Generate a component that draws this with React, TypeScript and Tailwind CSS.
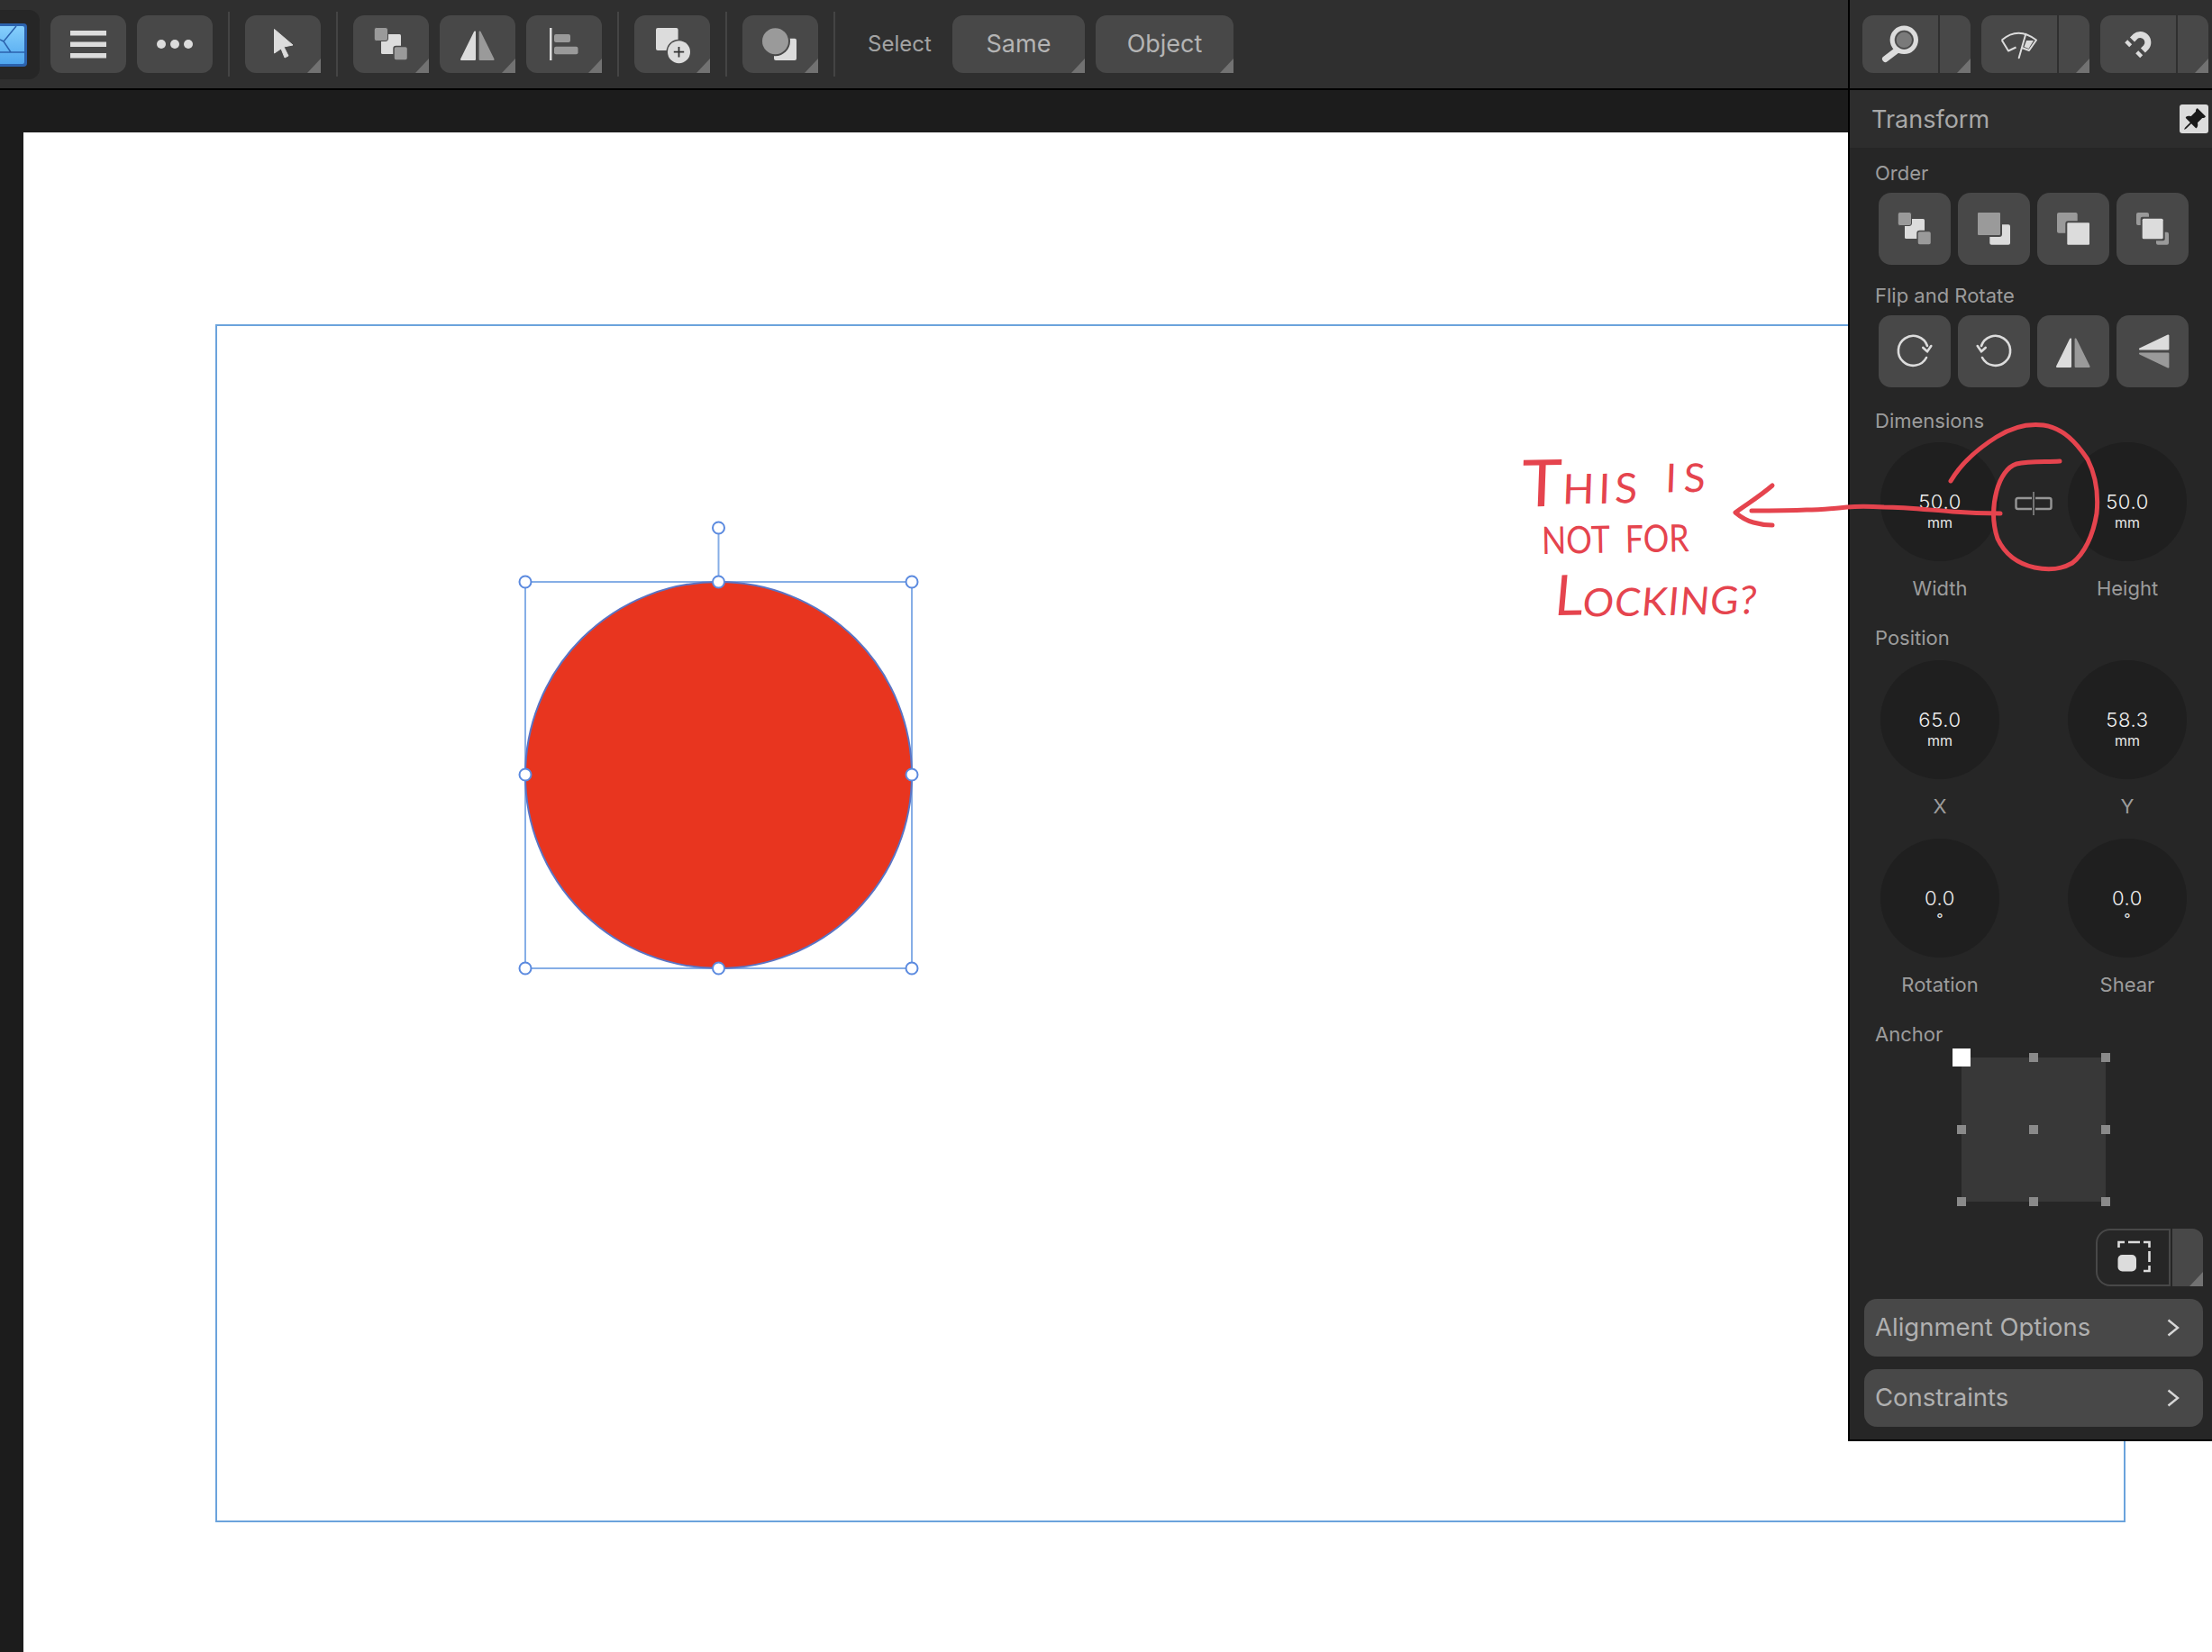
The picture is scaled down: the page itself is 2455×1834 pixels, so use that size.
import type { ReactNode } from "react";
import { BsPinAngleFill } from "react-icons/bs";

const LIGHT = "#dcdcdc";
const GREY = "#9a9a9a";
const GAP = "#484848";

// all toolbar / panel glyphs share an 80x80 box so they can be reused at both sizes
const Glyph = ({ children }: { children: ReactNode }) => (
    <svg viewBox="0 0 80 80" className="w-[80px] h-[80px] shrink-0">
        {children}
    </svg>
);

const OrderSwap = () => (
    <Glyph>
        <rect x="29" y="29" width="22" height="22" rx="1.5" fill={LIGHT} />
        <rect x="21.2" y="21.5" width="15.3" height="15" rx="2.5" fill={GREY} stroke={GAP} strokeWidth="1" />
        <rect x="43" y="42.5" width="15.5" height="15.5" rx="2.5" fill={GREY} stroke={GAP} strokeWidth="1.5" />
    </Glyph>
);

const OrderBack = () => (
    <Glyph>
        <rect x="35.3" y="35.3" width="22.7" height="22.4" rx="2" fill={LIGHT} />
        <rect x="21" y="21" width="27" height="27" rx="2" fill={GREY} stroke={GAP} strokeWidth="2" />
    </Glyph>
);

const OrderFront = () => (
    <Glyph>
        <rect x="22" y="22" width="22.7" height="22.7" rx="2" fill={GREY} />
        <rect x="32.3" y="32.3" width="26.7" height="26.4" rx="2" fill={LIGHT} stroke={GAP} strokeWidth="2" />
    </Glyph>
);

const OrderStack = () => (
    <Glyph>
        <rect x="22" y="22" width="14" height="14" rx="2" fill={GREY} />
        <rect x="44" y="43.7" width="14" height="14" rx="2" fill={GREY} />
        <rect x="26.7" y="26.7" width="27" height="26.6" rx="2" fill={GAP} />
        <rect x="28.7" y="28.7" width="23" height="22.6" rx="1.5" fill={LIGHT} />
    </Glyph>
);

const RotateArrow = ({ flip }: { flip?: boolean }) => (
    <Glyph>
        <g transform={flip ? "matrix(-1 0 0 1 80 0)" : undefined} fill="none" stroke={LIGHT} strokeWidth="2.6" strokeLinecap="round" strokeLinejoin="round">
            <path d="M53 47A16.5 16.5 0 1 1 54 34" />
            <path d="M49.3 36L54 40.3L58.3 34" />
        </g>
    </Glyph>
);

const FlipH = () => (
    <Glyph>
        <path d="M37 26.5V57H22Z" fill={LIGHT} stroke={LIGHT} strokeWidth="2" strokeLinejoin="round" />
        <path d="M42.6 26.5V57H57.6Z" fill={GREY} stroke={GREY} strokeWidth="2" strokeLinejoin="round" />
    </Glyph>
);

const FlipV = () => (
    <Glyph>
        <path d="M57.4 22.5V37.4H26Z" fill={LIGHT} stroke={LIGHT} strokeWidth="2" strokeLinejoin="round" />
        <path d="M57.4 57.5V42.6H26Z" fill={GREY} stroke={GREY} strokeWidth="2" strokeLinejoin="round" />
    </Glyph>
);

const Burger = () => (
    <Glyph>
        <rect x="20" y="25" width="40" height="5.5" fill={LIGHT} />
        <rect x="20" y="37.5" width="40" height="5.5" fill={LIGHT} />
        <rect x="20" y="50" width="40" height="5.5" fill={LIGHT} />
    </Glyph>
);

const Dots = () => (
    <Glyph>
        <circle cx="25" cy="40" r="5" fill={LIGHT} />
        <circle cx="40" cy="40" r="5" fill={LIGHT} />
        <circle cx="55" cy="40" r="5" fill={LIGHT} />
    </Glyph>
);

const Cursor = () => (
    <Glyph>
        <path d="M30.5 23.5L51 41L41 43L46 53L42 55L38 45L30.5 50Z" fill={LIGHT} stroke={LIGHT} strokeWidth="1" strokeLinejoin="round" />
    </Glyph>
);

const AlignLeft = () => (
    <Glyph>
        <rect x="24" y="22" width="2.5" height="36" fill={LIGHT} />
        <rect x="29" y="29" width="18" height="9" rx="2" fill={GREY} />
        <rect x="29" y="42.7" width="26.5" height="8.5" rx="2" fill={GREY} />
    </Glyph>
);

const AddShape = () => (
    <Glyph>
        <rect x="22" y="22" width="24.6" height="25" rx="2" fill={LIGHT} />
        <circle cx="47.5" cy="48.7" r="14" fill={GAP} />
        <circle cx="47.5" cy="48.7" r="12.5" fill={LIGHT} />
        <path d="M47.5 43V54.4M41.8 48.7H53.2" stroke="#333333" strokeWidth="1.8" />
    </Glyph>
);

const Geometry = () => (
    <Glyph>
        <rect x="33" y="33.7" width="25" height="24.3" rx="2" fill={LIGHT} />
        <ellipse cx="34.5" cy="36.7" rx="16.5" ry="16.5" fill={GAP} />
        <ellipse cx="34.5" cy="36.7" rx="14.5" ry="14.5" fill={GREY} />
    </Glyph>
);

const Magnifier = () => (
    <Glyph>
        <path d="M36 47L23.5 56.5" stroke={LIGHT} strokeWidth="7" strokeLinecap="round" />
        <circle cx="44.3" cy="35.3" r="13.2" fill="#7a7a7a" stroke={LIGHT} strokeWidth="5" />
        <circle cx="44.3" cy="35.3" r="9.5" fill="none" stroke="#484848" strokeWidth="1.6" />
    </Glyph>
);

const ViewWiper = () => (
    <Glyph>
        <g transform="translate(-2 0)">
            <g fill="none" stroke={LIGHT} strokeWidth="2" strokeLinejoin="round">
                <path d="M22.7 35.5Q41 20 61 35.5L53 47L45 44" />
                <path d="M22.7 35.5L30 47.5L38.5 43.5" />
                <path d="M41.7 55.3L49.3 28.7" strokeLinecap="round" />
            </g>
            <path d="M50 36L58 36L52.5 45L47.5 43Z" fill={LIGHT} />
        </g>
    </Glyph>
);

const Magnet = () => (
    <Glyph>
        <path d="M33.5 35L36.7 31.7A8.5 8.5 0 0 1 48.7 43.7L45.4 47" fill="none" stroke={LIGHT} strokeWidth="7" />
        <path d="M30.7 37.7L27.7 40.7M42.7 49.7L39.7 52.7" stroke={LIGHT} strokeWidth="7" />
    </Glyph>
);

const Corner = () => (
    <span className="absolute right-0 bottom-0 w-[15px] h-[16px] bg-[#727272] [clip-path:polygon(100%_0,100%_100%,0_100%)]" />
);

const ToolButton = ({ children, arrow = true, className = "w-[84px]" }: { children: ReactNode; arrow?: boolean; className?: string }) => (
    <div className={`relative h-[64px] flex items-center justify-center bg-[#484848] rounded-[12px] ${arrow ? "rounded-br-none" : ""} ${className}`}>
        {children}
        {arrow && <Corner />}
    </div>
);

const SplitButton = ({ children }: { children: ReactNode }) => (
    <div className="flex h-[64px] w-[120px]">
        <div className="w-[84px] h-full flex items-center justify-center bg-[#484848] rounded-l-[12px]">{children}</div>
        <div className="relative ml-[2px] w-[34px] h-full bg-[#484848] rounded-tr-[12px]">
            <Corner />
        </div>
    </div>
);

const Sep = () => <div className="mx-[17px] w-[2px] h-[72px] bg-[#444444]" />;

const Logo = () => (
    <div className="w-[44px] h-[77px] bg-[#262626] rounded-r-[12px] flex items-center">
        <svg viewBox="0 0 44 77" className="w-[44px] h-[77px]">
            <defs>
                <linearGradient id="logo-blue" x1="0" y1="0" x2="0" y2="1">
                    <stop offset="0" stopColor="#86cffc" />
                    <stop offset="1" stopColor="#4fa6ee" />
                </linearGradient>
            </defs>
            <rect x="-20" y="15" width="50" height="48" rx="4" fill="#2b62ad" />
            <rect x="-20" y="18" width="47" height="42" rx="2" fill="url(#logo-blue)" />
            <path d="M0 47H27M18 18L4 35L12 47M0 33L4 35" stroke="#2b62ad" strokeWidth="1.5" fill="none" />
        </svg>
    </div>
);

const Toolbar = () => (
    <div className="h-[100px] flex items-center bg-[#2f2f2f] border-b-2 border-black">
        <Logo />
        <ToolButton arrow={false} className="ml-[12px] w-[84px]"><Burger /></ToolButton>
        <ToolButton arrow={false} className="ml-[12px] w-[84px]"><Dots /></ToolButton>
        <Sep />
        <ToolButton><Cursor /></ToolButton>
        <Sep />
        <div className="flex gap-[12px]">
            <ToolButton><OrderSwap /></ToolButton>
            <ToolButton><FlipH /></ToolButton>
            <ToolButton><AlignLeft /></ToolButton>
        </div>
        <Sep />
        <ToolButton><AddShape /></ToolButton>
        <Sep />
        <ToolButton><Geometry /></ToolButton>
        <Sep />
        <span className="ml-[19px] w-[94px] text-[24px] text-[#a3a3a3]">Select</span>
        <ToolButton className="w-[147px]"><span className="text-[27px] text-[#b4b4b4]">Same</span></ToolButton>
        <ToolButton className="ml-[12px] w-[153px]"><span className="text-[27px] text-[#b4b4b4]">Object</span></ToolButton>
        <div className="ml-auto h-full w-[404px] pl-[14px] flex items-center gap-[12px] border-l-2 border-black">
            <SplitButton><Magnifier /></SplitButton>
            <SplitButton><ViewWiper /></SplitButton>
            <SplitButton><Magnet /></SplitButton>
        </div>
    </div>
);

const SectionLabel = ({ children, className = "" }: { children: ReactNode; className?: string }) => (
    <div className={`h-[28px] pl-[28px] text-[22px] leading-[28px] text-[#9c9c9c] ${className}`}>{children}</div>
);

const Square = ({ children }: { children: ReactNode }) => (
    <div className="w-[80px] h-[80px] flex items-center justify-center bg-[#484848] rounded-[14px]">{children}</div>
);

const Dial = ({ value, unit, label }: { value: string; unit: string; label: string }) => (
    <div className="w-[132px] flex flex-col items-center">
        <div className="w-[132px] h-[132px] pt-[54px] flex flex-col items-center rounded-full bg-[#1f1f1f]">
            <span className="text-[22px] leading-[24px] tracking-[0.6px] font-light text-[#f0f0f0]">{value}</span>
            <span className="mt-[1px] text-[16px] leading-[20px] text-[#e6e6e6]">{unit}</span>
        </div>
        <span className="mt-[16px] h-[28px] text-[22px] leading-[28px] text-[#9c9c9c]">{label}</span>
    </div>
);

const LinkIcon = () => (
    <svg viewBox="0 0 42 26" className="w-[42px] h-[26px]" fill="none" stroke="#969696" strokeWidth="2.4">
        <path d="M19 7H3.5Q1.5 7 1.5 9V17Q1.5 19 3.5 19H19M23 7H38.5Q40.5 7 40.5 9V17Q40.5 19 38.5 19H23" />
        <path d="M21 0V26" strokeWidth="1.4" />
    </svg>
);

const ANCHOR_SPOTS = [
    "left-0 top-1/2",
    "left-0 top-full",
    "left-1/2 top-0",
    "left-1/2 top-1/2",
    "left-1/2 top-full",
    "left-full top-0",
    "left-full top-1/2",
    "left-full top-full",
];

const Anchor = () => (
    <div className="relative ml-[124px] mt-[12px] w-[160px] h-[160px] bg-[#383838]">
        {ANCHOR_SPOTS.map((spot) => (
            <span key={spot} className={`absolute w-[10px] h-[10px] -translate-x-1/2 -translate-y-1/2 bg-[#8a8a8a] ${spot}`} />
        ))}
        <span className="absolute left-0 top-0 w-[20px] h-[20px] -translate-x-1/2 -translate-y-1/2 bg-white" />
    </div>
);

const ExpandRow = ({ label, className = "" }: { label: string; className?: string }) => (
    <div className={`ml-[16px] mr-[10px] h-[64px] pl-[12px] pr-[26px] flex items-center justify-between rounded-[14px] bg-[#484848] ${className}`}>
        <span className="text-[27.5px] text-[#b0b0b0]">{label}</span>
        <svg viewBox="0 0 14 20" className="w-[14px] h-[20px]" fill="none" stroke="#d6d6d6" strokeWidth="2.4">
            <path d="M1.5 1.5L12 10L1.5 18.5" />
        </svg>
    </div>
);

const TransformPanel = () => (
    <div className="absolute right-0 top-0 w-[404px] pb-[14px] bg-[#262626] border-l-2 border-b-2 border-black">
        <div className="h-[64px] pl-[24px] pr-[4px] flex items-center justify-between bg-[#2d2d2d]">
            <span className="pt-[2px] text-[27px] text-[#a8a8a8]">Transform</span>
            <div className="w-[32px] h-[32px] flex items-center justify-center rounded-[3px] bg-[#dcdcdc]">
                <BsPinAngleFill className="w-[27px] h-[27px] text-[#1a1a1a]" />
            </div>
        </div>

        <SectionLabel className="mt-[14px]">Order</SectionLabel>
        <div className="mt-[8px] pl-[32px] flex gap-[8px]">
            <Square><OrderSwap /></Square>
            <Square><OrderBack /></Square>
            <Square><OrderFront /></Square>
            <Square><OrderStack /></Square>
        </div>

        <SectionLabel className="mt-[20px]">Flip and Rotate</SectionLabel>
        <div className="mt-[8px] pl-[32px] flex gap-[8px]">
            <Square><RotateArrow /></Square>
            <Square><RotateArrow flip /></Square>
            <Square><FlipH /></Square>
            <Square><FlipV /></Square>
        </div>

        <SectionLabel className="mt-[23px]">Dimensions</SectionLabel>
        <div className="mt-[10px] pl-[34px] w-[374px] flex justify-between">
            <Dial value="50.0" unit="mm" label="Width" />
            <div className="h-[136px] flex items-center"><LinkIcon /></div>
            <Dial value="50.0" unit="mm" label="Height" />
        </div>

        <SectionLabel className="mt-[27px]">Position</SectionLabel>
        <div className="mt-[11px] pl-[34px] w-[374px] flex justify-between">
            <Dial value="65.0" unit="mm" label="X" />
            <Dial value="58.3" unit="mm" label="Y" />
        </div>
        <div className="mt-[22px] pl-[34px] w-[374px] flex justify-between">
            <Dial value="0.0" unit="°" label="Rotation" />
            <Dial value="0.0" unit="°" label="Shear" />
        </div>

        <SectionLabel className="mt-[27px]">Anchor</SectionLabel>
        <Anchor />

        <div className="mt-[30px] pr-[10px] flex justify-end">
            <div className="w-[83px] h-[64px] flex items-center justify-center rounded-l-[16px] border-2 border-[#484848]">
                <svg viewBox="0 0 80 64" className="w-[80px] h-[64px] shrink-0">
                    <path d="M23.5 21V15H30M34 15H47M51 15H57.5V21M57.5 25V37M57.5 41V47H51" fill="none" stroke={LIGHT} strokeWidth="2.6" />
                    <rect x="22.5" y="29" width="20.5" height="18.5" rx="5" fill={LIGHT} />
                </svg>
            </div>
            <div className="relative ml-[2px] w-[34px] h-[64px] bg-[#484848] rounded-tr-[12px]">
                <Corner />
            </div>
        </div>

        <ExpandRow label="Alignment Options" className="mt-[14px]" />
        <ExpandRow label="Constraints" className="mt-[14px]" />
    </div>
);

const HANDLES = [
    [583, 646], [797.5, 646], [1012, 646],
    [583, 860], [1012, 860],
    [583, 1075], [797.5, 1075], [1012, 1075],
];

// circle and selection box, in page coordinates
const Selection = () => (
    <svg viewBox="560 570 480 530" className="absolute left-[534px] top-[423px] w-[480px] h-[530px]">
        <path d="M797.5 586V646" stroke="#86aee6" strokeWidth="2" />
        <rect x="583" y="646" width="429" height="429" fill="none" stroke="#86aee6" strokeWidth="2" />
        <circle cx="797.5" cy="860.5" r="214.5" fill="#e8351f" stroke="#5a74c4" strokeWidth="2" />
        {HANDLES.map(([x, y]) => (
            <circle key={`${x}-${y}`} cx={x} cy={y} r="6.5" fill="#ffffff" stroke="#5b8adf" strokeWidth="2" />
        ))}
        <circle cx="797.5" cy="586" r="6.5" fill="#ffffff" stroke="#5b8adf" strokeWidth="2" />
    </svg>
);

const Scribbles = () => (
    <svg viewBox="0 0 2455 1834" className="absolute inset-0 w-[2455px] h-[1834px] pointer-events-none" fill="none" stroke="#e5444e" strokeWidth="5" strokeLinecap="round" strokeLinejoin="round">
        <path d="M2165 534C2178 512 2200 495 2216 485C2235 473 2252 470 2268 472C2290 475 2305 492 2317 510C2326 528 2329 550 2327 570C2323 595 2313 615 2300 625C2288 632 2272 633 2258 630C2240 626 2225 615 2217 598C2211 580 2212 560 2216 545C2220 530 2228 518 2238 515C2252 512 2270 513 2286 512" />
        <path d="M2220 570C2200 570 2180 569 2167 568C2140 566 2115 563 2091 563C2075 562 2060 562 2050 563C2030 565 2015 566 2005 566C1985 567 1965 567 1944 567" />
        <path d="M1967 539C1952 552 1938 560 1926 569C1932 574 1938 578 1946 580C1953 582 1960 583 1967 583" />
    </svg>
);

const Note = () => (
    <div className="absolute left-[1690px] top-[500px] w-[270px] [font-family:'Lato',sans-serif] text-[#e5444e] leading-none">
        <div className="flex items-end h-[68px] -skew-x-3 -rotate-1">
            <span className="text-[72px] scale-x-105">T</span>
            <span className="ml-[2px] mb-[4px] text-[46px] tracking-[5px]">HIS</span>
            <span className="ml-[26px] mb-[16px] text-[44px] tracking-[8px]">IS</span>
        </div>
        <div className="ml-[21px] mt-[14px] h-[38px] flex items-end origin-left scale-x-[.85] text-[42px] -rotate-1">
            <span>NOT</span>
            <span className="ml-[20px]">FOR</span>
        </div>
        <div className="ml-[36px] mt-[6px] flex items-end -skew-x-6 -rotate-1 text-[43px]">
            <span className="text-[62px]">L</span>
            <span className="tracking-[1px]">OCKING?</span>
        </div>
    </div>
);

export default function App() {
    return (
        <div className="relative w-[2455px] h-[1834px] overflow-hidden flex flex-col bg-[#1c1c1c] [font-family:'Inter',sans-serif]">
            <Toolbar />
            <div className="relative flex-1 pt-[47px] pl-[26px]">
                <div className="relative w-full h-full bg-white">
                    <div className="absolute left-[213px] top-[213px] w-[2120px] h-[1330px] border-2 border-[#6ba3dc]" />
                    <Selection />
                </div>
                <TransformPanel />
            </div>
            <Note />
            <Scribbles />
        </div>
    );
}
